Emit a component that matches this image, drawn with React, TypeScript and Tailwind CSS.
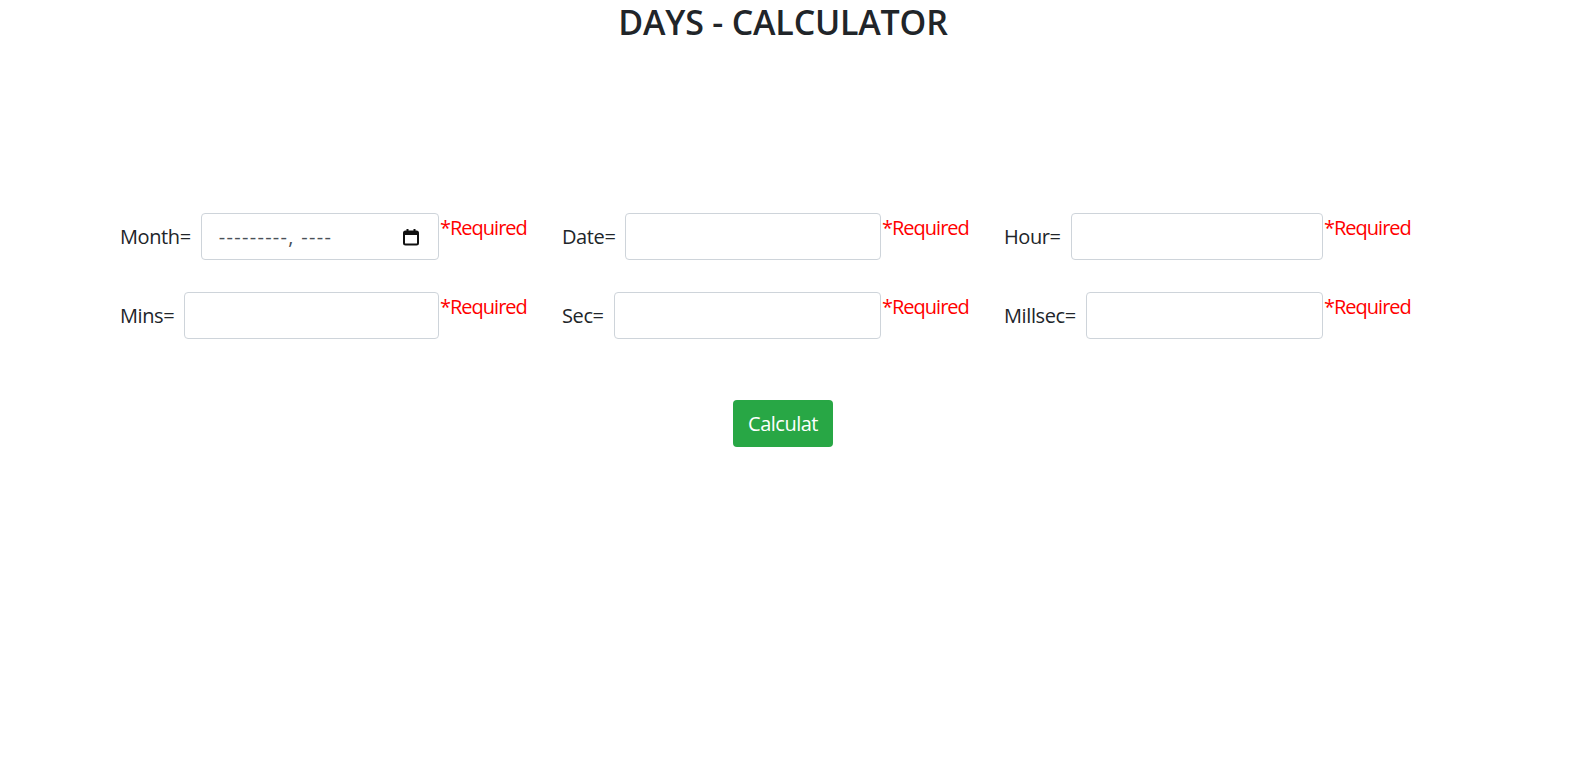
const font = { fontFamily: '"Open Sans", "Noto Sans", sans-serif' };

function Calendar() {
  return (
    <svg width="18" height="18" viewBox="0 0 18 18" fill="none">
      <rect x="2" y="3.5" width="14" height="13" rx="1.5" stroke="#111" strokeWidth="2" />
      <rect x="2" y="3.5" width="14" height="3.5" fill="#111" />
      <rect x="4.5" y="1" width="2" height="3" fill="#111" />
      <rect x="11.5" y="1" width="2" height="3" fill="#111" />
    </svg>
  );
}

function Field({ label, month }: { label: string; month?: boolean }) {
  return (
    <div className="flex items-start">
      <div className="flex w-[319px] items-center gap-[10px]">
        <span className="text-[20px] leading-[30px] text-[#212529] tracking-[-0.4px]">{label}</span>
        {month ? (
          <div className="flex h-[47px] flex-1 items-center justify-between rounded-[4px] border border-[#ced4da] bg-white pl-[17px] pr-[18px]">
            <span className="text-[20px] text-[#495057] tracking-[1.3px]">---------, ----</span>
            <Calendar />
          </div>
        ) : (
          <input className="h-[47px] min-w-0 flex-1 rounded-[4px] border border-[#ced4da] bg-white px-4 text-[20px] outline-none" />
        )}
      </div>
      <span className="ml-px text-[20px] leading-[30px] text-[#ff0000] tracking-[-1px]">*Required</span>
    </div>
  );
}

export default function App() {
  return (
    <div className="min-h-[758px] bg-white" style={font}>
      <div className="flex w-[1566px] flex-col">
        <h1 className="text-center text-[34px] font-semibold leading-[44px] text-[#212529] tracking-[-0.2px]">
          DAYS - CALCULATOR
        </h1>
        <div className="mx-auto mt-[169px] grid grid-cols-[442px_442px_442px] gap-y-8">
          <Field label="Month=" month />
          <Field label="Date=" />
          <Field label="Hour=" />
          <Field label="Mins=" />
          <Field label="Sec=" />
          <Field label="Millsec=" />
        </div>
        <button className="mx-auto mt-[61px] h-[47px] w-[100px] rounded-[4px] bg-[#28a745] text-[20px] text-white tracking-[-0.5px]">
          Calculat
        </button>
      </div>
    </div>
  );
}
